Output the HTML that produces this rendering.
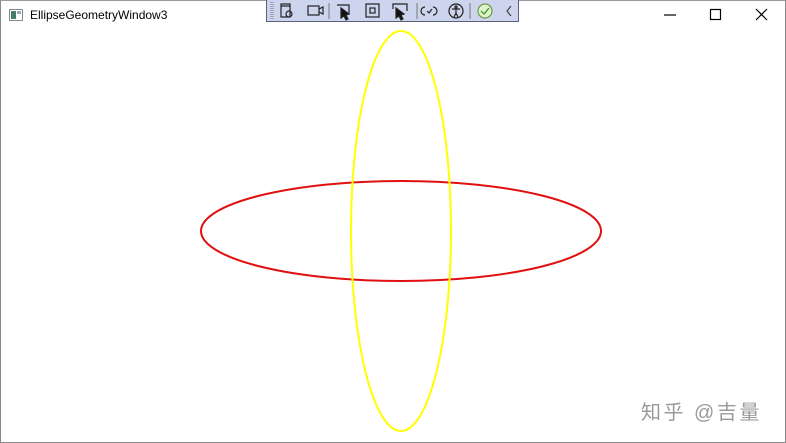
<!DOCTYPE html>
<html><head><meta charset="utf-8"><style>
html,body{margin:0;padding:0}
body{width:786px;height:443px;position:relative;background:#fff;overflow:hidden;font-family:"Liberation Sans","Noto Sans CJK SC",sans-serif}
.frame{position:absolute;left:0;top:0;width:784px;height:441px;border:1px solid #8a8a8a;border-top:1px solid #9a9a9a}
.title{position:absolute;left:30px;top:8px;font-size:12px;color:#000}
.tb{position:absolute;left:266px;top:0;width:251px;height:21px;background:#ccd4ee;border:1px solid #5a6078;border-top:none}
.wm{position:absolute;left:641px;top:396px;font-size:20px;color:#9a9a9a;letter-spacing:2.5px;white-space:nowrap}
</style></head><body>
<div class="frame"></div>
<svg style="position:absolute;left:9px;top:9px" width="14" height="12"><rect x="0.5" y="0.5" width="13" height="11" fill="#fff" stroke="#888"/><rect x="2" y="2" width="5" height="8" fill="#4a7a6a"/><rect x="8" y="2" width="4" height="3" fill="#9ab"/></svg>
<div class="title">EllipseGeometryWindow3</div>
<div class="tb">
<svg width="251" height="21" style="position:absolute;left:0;top:0" fill="none" stroke="#222" stroke-width="1.2">
<g stroke="#777" stroke-width="1" stroke-dasharray="1 1"><line x1="4" y1="2" x2="4" y2="20"/><line x1="6" y1="2" x2="6" y2="20"/></g>
<rect x="14" y="4" width="9" height="13"/><line x1="14" y1="6" x2="23" y2="6"/><circle cx="22" cy="14" r="3"/>
<rect x="41" y="6" width="11" height="9"/><path d="M52 9l4-2v7l-4-2"/>
<line x1="62" y1="3" x2="62" y2="19" stroke="#888"/>
<path d="M70 5h12v9"/><path d="M74 8l8 6-3 1 2 4-2 1-2-4-3 2z" fill="#111"/>
<rect x="99" y="4" width="13" height="13"/><rect x="103" y="8" width="5" height="5"/>
<path d="M126 9v-5h14v7"/><path d="M129 8l8 6-3 1 2 4-2 1-2-4-3 2z" fill="#111"/>
<line x1="150" y1="3" x2="150" y2="19" stroke="#888"/>
<path d="M158 7a4 4 0 000 8M166 7a4 4 0 010 8"/><path d="M160 11l2 2 3-4"/>
<circle cx="189" cy="11" r="7"/><circle cx="189" cy="7" r="1"/><path d="M185 9h8M189 9v4l-2 4M189 13l2 4"/>
<line x1="203" y1="3" x2="203" y2="19" stroke="#888"/>
<circle cx="218" cy="11" r="7" fill="#dff3c8" stroke="#6a9a4a"/><path d="M214 11l3 3 5-6" stroke="#3a8a2a"/>
<path d="M244 6l-4 5 4 5" stroke="#444"/>
</svg></div>
<svg style="position:absolute;left:0;top:0" width="786" height="443" fill="none" stroke="#000" stroke-width="1.2">
<line x1="664" y1="15" x2="676" y2="15"/>
<rect x="710.5" y="9.5" width="10" height="10"/>
<path d="M756 9l11 11M767 9l-11 11"/>
<ellipse cx="401" cy="231" rx="200" ry="50" stroke="#e01010" stroke-width="2"/>
<ellipse cx="401" cy="231" rx="50" ry="200" stroke="#ffff00" stroke-width="2"/>
</svg>
<div class="wm">知乎 @吉量</div>
</body></html>
